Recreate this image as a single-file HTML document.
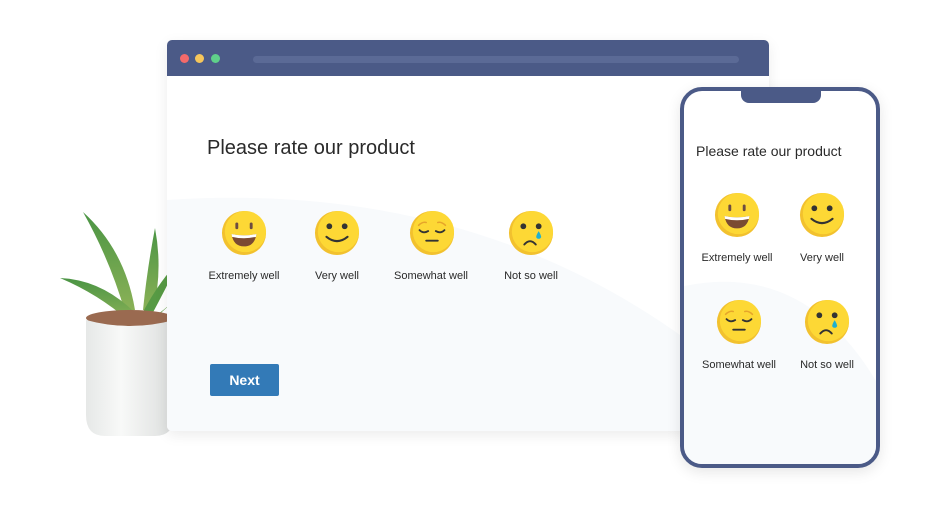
<!DOCTYPE html>
<html><head><meta charset="utf-8"><style>
*{margin:0;padding:0;box-sizing:border-box}
body{width:946px;height:519px;background:#fff;position:relative;overflow:hidden;font-family:"Liberation Sans",sans-serif;color:#222}
.abs{position:absolute}
.lbl{position:absolute;font-size:11px;color:#2a2a2a;text-align:center;width:120px;white-space:nowrap}
svg.e{position:absolute;width:46px;height:46px}
</style></head><body>
<svg width="0" height="0" style="position:absolute">
<defs>
<symbol id="face" viewBox="0 0 48 48"><circle cx="24" cy="24" r="23" fill="#f2c12e"/><circle cx="25.5" cy="22.5" r="21.5" fill="#fdd835"/></symbol>
<symbol id="e1" viewBox="0 0 48 48"><use href="#face"/><rect x="15" y="13" width="3" height="7" rx="1.5" fill="#6d4c41"/><rect x="30" y="13" width="3" height="7" rx="1.5" fill="#6d4c41"/><path d="M11 25 Q24 28 37 25 Q35 38 24 38 Q13 38 11 25Z" fill="#7b4a32"/><path d="M11 25 Q24 28 37 25 L36.5 28 Q24 31 11.5 28Z" fill="#fff"/></symbol>
<symbol id="e2" viewBox="0 0 48 48"><use href="#face"/><circle cx="16" cy="17" r="3" fill="#333"/><circle cx="32" cy="17" r="3" fill="#333"/><path d="M13 28 Q24 37 35 28" stroke="#333" stroke-width="2.2" fill="none" stroke-linecap="round"/></symbol>
<symbol id="e3" viewBox="0 0 48 48"><use href="#face"/><path d="M10 16 Q14 12 18 13 M38 16 Q34 12 30 13" stroke="#e6a52a" stroke-width="1.6" fill="none" stroke-linecap="round"/><path d="M11 21 Q15 25 20 22 M28 22 Q33 25 37 21" stroke="#333" stroke-width="2" fill="none" stroke-linecap="round"/><path d="M18 32 H30" stroke="#333" stroke-width="2" stroke-linecap="round"/></symbol>
<symbol id="e4" viewBox="0 0 48 48"><use href="#face"/><circle cx="16" cy="17" r="3" fill="#333"/><circle cx="32" cy="17" r="3" fill="#333"/><path d="M32 22 Q35 27 34.5 28.5 A2.8 2.8 0 0 1 29.5 28.5 Q29 27 32 22Z" fill="#1fb0d0"/><path d="M17 36 Q23 29 29 36" stroke="#333" stroke-width="2" fill="none" stroke-linecap="round"/></symbol>
</defs></svg>

<!-- plant -->
<svg class="abs" style="left:55px;top:200px" width="130" height="250" viewBox="0 0 130 250">
<defs><linearGradient id="pot" x1="0" x2="1"><stop offset="0" stop-color="#e6e8e7"/><stop offset=".4" stop-color="#f8f9f8"/><stop offset="1" stop-color="#dcdedd"/></linearGradient>
<linearGradient id="lf" x1="0" y1="0" x2="0" y2="1"><stop offset="0" stop-color="#4a9444"/><stop offset="1" stop-color="#8cb257"/></linearGradient></defs>
<path d="M28 12 Q70 50 80 110 L70 112 Q55 60 28 12Z" fill="url(#lf)"/>
<path d="M100 28 Q108 70 98 112 L88 110 Q92 70 100 28Z" fill="url(#lf)"/>
<path d="M5 78 Q50 80 85 118 L75 122 Q45 95 5 78Z" fill="url(#lf)"/>
<path d="M125 60 Q110 90 95 118 L88 112 Q105 80 125 60Z" fill="#579a44"/>
<path d="M125 95 Q110 110 92 122 L100 118 Q115 105 125 95Z" fill="#5a9a40"/>
<ellipse cx="75" cy="118" rx="44" ry="8" fill="#9a6a50"/>
<path d="M31 120 Q75 132 119 120 L119 215 Q119 236 100 236 L50 236 Q31 236 31 215Z" fill="url(#pot)"/>
</svg>

<!-- browser window -->
<div class="abs" style="left:167px;top:40px;width:602px;height:391px;background:#fff;border-radius:5px;box-shadow:0 4px 14px rgba(0,0,0,.08);overflow:hidden">
  <svg class="abs" style="left:0;top:0" width="602" height="391"><path d="M0 160 Q300 140 520 300 L602 391 L0 391Z" fill="#f8fafc"/></svg>
  <div class="abs" style="left:0;top:0;width:602px;height:36px;background:#4b5a87"></div>
  <div class="abs" style="left:13px;top:14px;width:9px;height:9px;border-radius:50%;background:#f46a6a"></div>
  <div class="abs" style="left:28px;top:14px;width:9px;height:9px;border-radius:50%;background:#f6c65b"></div>
  <div class="abs" style="left:44px;top:14px;width:9px;height:9px;border-radius:50%;background:#5fd08a"></div>
  <div class="abs" style="left:86px;top:16px;width:486px;height:7px;border-radius:4px;background:#5b6a96"></div>
  <div class="abs" style="left:40px;top:97px;font-size:20px;color:#2a2a2a">Please rate our product</div>
  <div class="abs" style="left:43px;top:324px;width:69px;height:32px;background:#337ab7;border-radius:2px;color:#fff;font-size:14px;font-weight:bold;text-align:center;line-height:32px">Next</div>
</div>
<svg class="e" style="left:221px;top:210px"><use href="#e1"/></svg>
<svg class="e" style="left:314px;top:210px"><use href="#e2"/></svg>
<svg class="e" style="left:409px;top:210px"><use href="#e3"/></svg>
<svg class="e" style="left:508px;top:210px"><use href="#e4"/></svg>
<div class="lbl" style="left:184px;top:270px">Extremely well</div>
<div class="lbl" style="left:277px;top:270px">Very well</div>
<div class="lbl" style="left:371px;top:270px">Somewhat well</div>
<div class="lbl" style="left:471px;top:270px">Not so well</div>

<!-- phone -->
<div class="abs" style="left:680px;top:87px;width:200px;height:381px;border:4px solid #4b5a87;border-radius:22px;background:#fff;overflow:hidden;box-shadow:0 4px 14px rgba(0,0,0,.1)">
  <svg class="abs" style="left:0;top:0" width="192" height="373"><path d="M0 195 Q120 170 192 290 L192 373 L0 373Z" fill="#f8fafc"/></svg>
  <div class="abs" style="left:57px;top:-4px;width:80px;height:16px;background:#4b5a87;border-radius:0 0 8px 8px"></div>
  <div class="abs" style="left:12px;top:52px;font-size:14px;color:#2a2a2a;white-space:nowrap">Please rate our product</div>
</div>
<svg class="e" style="left:714px;top:192px"><use href="#e1"/></svg>
<svg class="e" style="left:799px;top:192px"><use href="#e2"/></svg>
<svg class="e" style="left:716px;top:299px"><use href="#e3"/></svg>
<svg class="e" style="left:804px;top:299px"><use href="#e4"/></svg>
<div class="lbl" style="left:677px;top:252px">Extremely well</div>
<div class="lbl" style="left:762px;top:252px">Very well</div>
<div class="lbl" style="left:679px;top:359px">Somewhat well</div>
<div class="lbl" style="left:767px;top:359px">Not so well</div>
</body></html>
